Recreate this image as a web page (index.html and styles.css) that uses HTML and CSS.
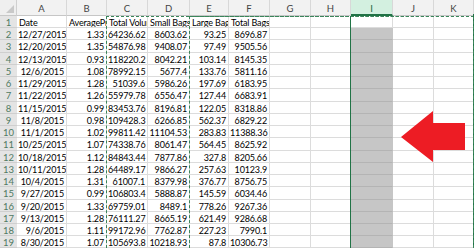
FILE: index.html
```html
<!DOCTYPE html>
<html>
<head>
<meta charset="utf-8">
<link rel="stylesheet" href="styles.css">
</head>
<body>
<div class="sheet">
  <div class="corner"><span class="tri"></span></div>
  <div class="ch">A</div><div class="ch">B</div><div class="ch">C</div><div class="ch">D</div><div class="ch">E</div><div class="ch">F</div><div class="ch">G</div><div class="ch">H</div><div class="ch hsel">I</div><div class="ch">J</div><div class="ch">K</div>

  <div class="rh">1</div><div class="c l">Date</div><div class="c l">AveragePrice</div><div class="c l">Total Volume</div><div class="c l">Small Bags</div><div class="c l">Large Bags</div><div class="c l">Total Bags</div><div class="c"></div><div class="c"></div><div class="c active"></div><div class="c"></div><div class="c"></div>
  <div class="rh">2</div><div class="c">12/27/2015</div><div class="c">1.33</div><div class="c">64236.62</div><div class="c">8603.62</div><div class="c">93.25</div><div class="c">8696.87</div><div class="c"></div><div class="c"></div><div class="c sel"></div><div class="c"></div><div class="c"></div>
  <div class="rh">3</div><div class="c">12/20/2015</div><div class="c">1.35</div><div class="c">54876.98</div><div class="c">9408.07</div><div class="c">97.49</div><div class="c">9505.56</div><div class="c"></div><div class="c"></div><div class="c sel"></div><div class="c"></div><div class="c"></div>
  <div class="rh">4</div><div class="c">12/13/2015</div><div class="c">0.93</div><div class="c">118220.2</div><div class="c">8042.21</div><div class="c">103.14</div><div class="c">8145.35</div><div class="c"></div><div class="c"></div><div class="c sel"></div><div class="c"></div><div class="c"></div>
  <div class="rh">5</div><div class="c">12/6/2015</div><div class="c">1.08</div><div class="c">78992.15</div><div class="c">5677.4</div><div class="c">133.76</div><div class="c">5811.16</div><div class="c"></div><div class="c"></div><div class="c sel"></div><div class="c"></div><div class="c"></div>
  <div class="rh">6</div><div class="c">11/29/2015</div><div class="c">1.28</div><div class="c">51039.6</div><div class="c">5986.26</div><div class="c">197.69</div><div class="c">6183.95</div><div class="c"></div><div class="c"></div><div class="c sel"></div><div class="c"></div><div class="c"></div>
  <div class="rh">7</div><div class="c">11/22/2015</div><div class="c">1.26</div><div class="c">55979.78</div><div class="c">6556.47</div><div class="c">127.44</div><div class="c">6683.91</div><div class="c"></div><div class="c"></div><div class="c sel"></div><div class="c"></div><div class="c"></div>
  <div class="rh">8</div><div class="c">11/15/2015</div><div class="c">0.99</div><div class="c">83453.76</div><div class="c">8196.81</div><div class="c">122.05</div><div class="c">8318.86</div><div class="c"></div><div class="c"></div><div class="c sel"></div><div class="c"></div><div class="c"></div>
  <div class="rh">9</div><div class="c">11/8/2015</div><div class="c">0.98</div><div class="c">109428.3</div><div class="c">6266.85</div><div class="c">562.37</div><div class="c">6829.22</div><div class="c"></div><div class="c"></div><div class="c sel"></div><div class="c"></div><div class="c"></div>
  <div class="rh">10</div><div class="c">11/1/2015</div><div class="c">1.02</div><div class="c">99811.42</div><div class="c">11104.53</div><div class="c">283.83</div><div class="c">11388.36</div><div class="c"></div><div class="c"></div><div class="c sel"></div><div class="c"></div><div class="c"></div>
  <div class="rh">11</div><div class="c">10/25/2015</div><div class="c">1.07</div><div class="c">74338.76</div><div class="c">8061.47</div><div class="c">564.45</div><div class="c">8625.92</div><div class="c"></div><div class="c"></div><div class="c sel"></div><div class="c"></div><div class="c"></div>
  <div class="rh">12</div><div class="c">10/18/2015</div><div class="c">1.12</div><div class="c">84843.44</div><div class="c">7877.86</div><div class="c">327.8</div><div class="c">8205.66</div><div class="c"></div><div class="c"></div><div class="c sel"></div><div class="c"></div><div class="c"></div>
  <div class="rh">13</div><div class="c">10/11/2015</div><div class="c">1.28</div><div class="c">64489.17</div><div class="c">9866.27</div><div class="c">257.63</div><div class="c">10123.9</div><div class="c"></div><div class="c"></div><div class="c sel"></div><div class="c"></div><div class="c"></div>
  <div class="rh">14</div><div class="c">10/4/2015</div><div class="c">1.31</div><div class="c">61007.1</div><div class="c">8379.98</div><div class="c">376.77</div><div class="c">8756.75</div><div class="c"></div><div class="c"></div><div class="c sel"></div><div class="c"></div><div class="c"></div>
  <div class="rh">15</div><div class="c">9/27/2015</div><div class="c">0.99</div><div class="c">106803.4</div><div class="c">5888.87</div><div class="c">145.59</div><div class="c">6034.46</div><div class="c"></div><div class="c"></div><div class="c sel"></div><div class="c"></div><div class="c"></div>
  <div class="rh">16</div><div class="c">9/20/2015</div><div class="c">1.33</div><div class="c">69759.01</div><div class="c">8489.1</div><div class="c">778.26</div><div class="c">9267.36</div><div class="c"></div><div class="c"></div><div class="c sel"></div><div class="c"></div><div class="c"></div>
  <div class="rh">17</div><div class="c">9/13/2015</div><div class="c">1.28</div><div class="c">76111.27</div><div class="c">8665.19</div><div class="c">621.49</div><div class="c">9286.68</div><div class="c"></div><div class="c"></div><div class="c sel"></div><div class="c"></div><div class="c"></div>
  <div class="rh">18</div><div class="c">9/6/2015</div><div class="c">1.11</div><div class="c">99172.96</div><div class="c">7762.87</div><div class="c">227.23</div><div class="c">7990.1</div><div class="c"></div><div class="c"></div><div class="c sel"></div><div class="c"></div><div class="c"></div>
  <div class="rh">19</div><div class="c">8/30/2015</div><div class="c">1.07</div><div class="c">105693.8</div><div class="c">10218.93</div><div class="c">87.8</div><div class="c">10306.73</div><div class="c"></div><div class="c"></div><div class="c sel"></div><div class="c"></div><div class="c"></div>

  <div class="rowsel"></div>
  <div class="ants ants-c"></div>
  <div class="ants ants-e"></div>
  <div class="selbox"><span class="handle"></span></div>

  <svg class="arrow" viewBox="0 0 70 54" width="70" height="54">
    <polygon points="1,26 33,0 33,12 65,12 65,39 33,39 33,51" fill="#ed1c24"/>
  </svg>
</div>
</body>
</html>
```

FILE: styles.css
```css
* { box-sizing: border-box; }
html, body { margin: 0; padding: 0; background: #fff; overflow: hidden; }

.sheet {
  position: relative;
  display: grid;
  grid-template-columns: 17px 50px 40px 41px 42px 39px 41px 41px 40px 42px 41px 40px;
  grid-template-rows: 16px repeat(19, 12.24px);
  width: 474px;
  height: 249px;
  font-family: Lato, "Open Sans", sans-serif;
  font-size: 9px;
  letter-spacing: -0.15px;
  color: #000;
}

.corner {
  position: relative;
  background: #efefef;
  border-right: 1px solid #d0d0d0;
  border-bottom: 1px solid #c8c8c8;
}
.tri {
  position: absolute;
  right: 2px;
  bottom: 2px;
  width: 0;
  height: 0;
  border-left: 8px solid transparent;
  border-bottom: 8px solid #c9c9c9;
}

.ch {
  background: #f2f2f2;
  border-right: 1px solid #d8d8d8;
  border-bottom: 1px solid #c6c6c6;
  color: #444;
  font-size: 9.5px;
  letter-spacing: 0;
  text-align: center;
  padding-top: 2px;
  line-height: 13px;
}
.ch.hsel {
  background: #d3f0e0;
  color: #1e6a3f;
  border-bottom: 2px solid #217346;
}

.rh {
  background: #e4e4e4;
  border-bottom: 1px solid #cfcfcf;
  color: #4f7a62;
  font-size: 9.5px;
  letter-spacing: 0;
  text-align: center;
  padding-top: 1px;
  line-height: 11px;
}

.c {
  border-right: 1px solid #dcdcdc;
  border-bottom: 1px solid #dcdcdc;
  white-space: nowrap;
  overflow: hidden;
  text-align: right;
  padding: 1px 2px 0 1px;
  line-height: 11px;
}
.c.l { text-align: left; padding-left: 2px; }
.c.sel { background: #c6c6c6; border-bottom-color: #b4b4b4; border-right-color: #c6c6c6; }

.rowsel {
  position: absolute;
  grid-column: 1;
  grid-row: 2 / 21;
  inset: 0;
  border-right: 1px solid #217346;
  pointer-events: none;
}

.ants {
  position: absolute;
  grid-row: 2 / 21;
  inset: 0 0 0 -1px;
  border-top: 1px dashed #3a855a;
  border-left: 1px dashed #3a855a;
  border-right: 1px dashed #3a855a;
  pointer-events: none;
}
.ants-c { grid-column: 4; }
.ants-e { grid-column: 6; }

.selbox {
  position: absolute;
  grid-column: 10;
  grid-row: 2 / 21;
  inset: 0 -1px 0 -1px;
  border-left: 1px solid #217346;
  border-right: 1px solid #217346;
  pointer-events: none;
}
.handle {
  position: absolute;
  right: -2px;
  top: -2px;
  width: 3px;
  height: 3px;
  background: #217346;
}

.arrow {
  position: absolute;
  left: 400px;
  top: 111px;
}
```
